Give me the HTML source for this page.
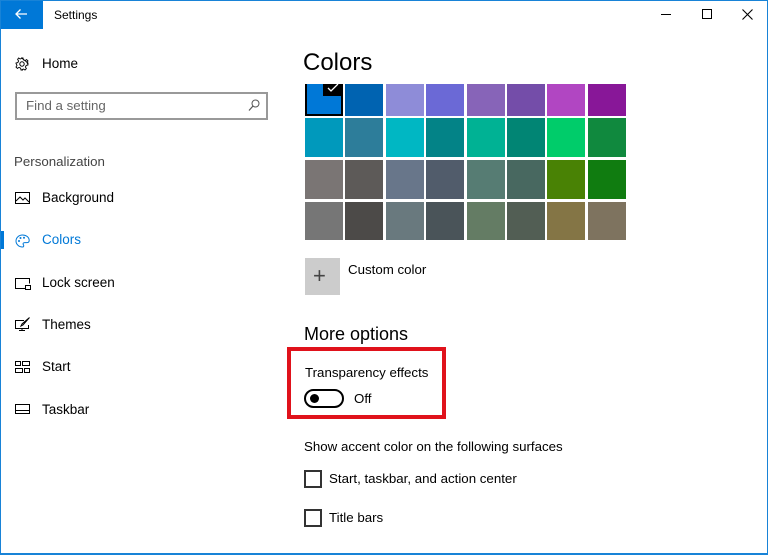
<!DOCTYPE html>
<html><head><meta charset="utf-8"><style>
*{margin:0;padding:0;box-sizing:border-box}
body{width:768px;height:555px;background:#fff;font-family:"Liberation Sans",sans-serif;color:#000;position:relative;overflow:hidden}
.a{position:absolute}
.frame{left:0;top:0;width:768px;height:555px;border:1px solid #1883d7;border-bottom:2px solid #1883d7}
.sw{position:absolute;width:38px}
.nav{position:absolute;left:42px;font-size:13.5px;color:#000}
.ic{position:absolute;left:15px}
.t{font-size:13.3px}
</style></head><body>
<div class="a" style="left:0;top:0;width:43px;height:29px;background:#0078d7"></div>
<svg class="a" style="left:14px;top:8px" width="14" height="12" viewBox="0 0 14 12"><path d="M13 6H2M6.5 1.5L2 6l4.5 4.5" stroke="#fff" stroke-width="1.3" fill="none"/></svg>
<div class="a" style="left:54px;top:8px;font-size:12px">Settings</div>
<div class="a" style="left:661px;top:14px;width:10px;height:1px;background:#000"></div>
<div class="a" style="left:702px;top:9px;width:10px;height:10px;border:1px solid #000"></div>
<svg class="a" style="left:742px;top:9px" width="11" height="11"><path d="M0.5 0.5L10.5 10.5M10.5 0.5L0.5 10.5" stroke="#000" stroke-width="1.1"/></svg>

<svg class="a" style="left:15px;top:57px" width="14" height="14" viewBox="0 0 14 14"><circle cx="7" cy="7" r="2.2" fill="none" stroke="#000"/><path d="M6 1h2l.4 1.8 1.6.8 1.6-1 1.4 1.4-1 1.6.8 1.6L13 7.8v-1.6M13 6v2l-1.8.4-.8 1.6 1 1.6-1.4 1.4-1.6-1-1.6.8L8 13H6l-.4-1.8-1.6-.8-1.6 1L1 10l1-1.6-.8-1.6L1 6.4V6l1.8-.4.8-1.6-1-1.6L3.6 1l1.6 1 1.6-.8z" fill="none" stroke="#000" stroke-width=".9"/></svg>
<div class="nav" style="top:56px">Home</div>
<div class="a" style="left:15px;top:92px;width:253px;height:28px;border:2px solid #999"></div>
<div class="a t" style="left:26px;top:98px;color:#666">Find a setting</div>
<svg class="a" style="left:248px;top:99px" width="12" height="13"><circle cx="7.5" cy="4.5" r="3.5" fill="none" stroke="#555"/><path d="M5 7L1 11.5" stroke="#555" stroke-width="1.2"/></svg>
<div class="a t" style="left:14px;top:154px;color:#444">Personalization</div>

<svg class="ic" style="top:192px" width="15" height="12"><rect x=".5" y=".5" width="14" height="11" fill="none" stroke="#000"/><path d="M1 9l4-4 3 3 2-2 4 4" fill="none" stroke="#000"/></svg>
<div class="nav" style="top:190px">Background</div>
<div class="a" style="left:0;top:231px;width:4px;height:18px;background:#0078d7"></div>
<svg class="ic" style="top:234px" width="15" height="14"><path d="M7.5 1a6.5 6 0 1 0 0 12c1.5 0 1.5-1.5.8-2.4-.7-1 0-2 1.4-2h2.5c1.5 0 2-1 2-2.3C14 3 11 1 7.5 1z" fill="none" stroke="#0078d7"/><circle cx="4" cy="7" r="1" fill="#0078d7"/><circle cx="5.5" cy="4" r="1" fill="#0078d7"/><circle cx="9" cy="3.8" r="1" fill="#0078d7"/></svg>
<div class="nav" style="top:232px;color:#0078d7">Colors</div>
<svg class="ic" style="top:277px" width="16" height="13"><path d="M10 11.5H.5v-10h14v5" fill="none" stroke="#000"/><rect x="10.5" y="8.5" width="5" height="4" fill="none" stroke="#000"/></svg>
<div class="nav" style="top:275px">Lock screen</div>
<svg class="ic" style="top:317px" width="16" height="14"><path d="M9 3.5H.5v8h13V8M4 13.5h6M7 11.5v2" fill="none" stroke="#000"/><path d="M14.5 .5L8 8l-2 1 1-2z" fill="none" stroke="#000"/></svg>
<div class="nav" style="top:317px">Themes</div>
<svg class="ic" style="top:361px" width="15" height="12"><rect x=".5" y=".5" width="5" height="4" fill="none" stroke="#000"/><rect x="7.5" y=".5" width="7" height="4" fill="none" stroke="#000"/><rect x=".5" y="7.5" width="7" height="4" fill="none" stroke="#000"/><rect x="9.5" y="7.5" width="5" height="4" fill="none" stroke="#000"/></svg>
<div class="nav" style="top:359px">Start</div>
<svg class="ic" style="top:404px" width="15" height="10"><rect x=".5" y=".5" width="14" height="9" fill="none" stroke="#000"/><path d="M1 6.5h13" stroke="#000"/></svg>
<div class="nav" style="top:402px">Taskbar</div>

<div class="a" style="left:303px;top:49px;font-size:24px;color:#000">Colors</div>
<div id="g"></div>
<div class="a" style="left:305px;top:258px;width:35px;height:37px;background:#ccc"></div>
<div class="a" style="left:313px;top:266px;font-size:22px;line-height:20px;color:#444;font-weight:300">+</div>
<div class="a t" style="left:348px;top:262px">Custom color</div>
<div class="a" style="left:304px;top:324px;font-size:18px">More options</div>
<div class="a" style="left:287px;top:347px;width:159px;height:72px;border:4px solid #e0121b"></div>
<div class="a t" style="left:305px;top:365px">Transparency effects</div>
<div class="a" style="left:304px;top:389px;width:40px;height:19px;border:2px solid #000;border-radius:10px"></div>
<div class="a" style="left:310px;top:394px;width:9px;height:9px;background:#000;border-radius:50%"></div>
<div class="a t" style="left:354px;top:391px">Off</div>
<div class="a t" style="left:304px;top:439px">Show accent color on the following surfaces</div>
<div class="a" style="left:304px;top:470px;width:18px;height:18px;border:2px solid #333"></div>
<div class="a t" style="left:329px;top:471px">Start, taskbar, and action center</div>
<div class="a" style="left:304px;top:509px;width:18px;height:18px;border:2px solid #333"></div>
<div class="a t" style="left:329px;top:510px">Title bars</div>
<div class="a frame"></div>
<script>
var c=[["#0078d7","#0063b1","#8e8cd8","#6b69d6","#8764b8","#744da9","#b146c2","#881798"],
["#0099bc","#2d7d9a","#00b7c3","#038387","#00b294","#018574","#00cc6a","#10893e"],
["#7a7574","#5d5a58","#68768a","#515c6b","#567c73","#486860","#498205","#107c10"],
["#767676","#4c4a48","#69797e","#4a5459","#647c64","#525e54","#847545","#7e735f"]];
var tops=[84,118,160,202],hs=[32,39,39,38],h="";
for(var r=0;r<4;r++)for(var i=0;i<8;i++){
var x=305+Math.round(i*40.4);
h+='<div class="sw" style="left:'+x+'px;top:'+tops[r]+'px;height:'+hs[r]+'px;background:'+c[r][i]+(r==0&&i==0?';border:2px solid #000;border-top:none':'')+'"></div>';}
h+='<div class="a" style="left:323px;top:84px;width:20px;height:12px;background:#000"></div><svg class="a" style="left:326px;top:84px" width="14" height="10"><path d="M2 4l3 3 7-7" stroke="#fff" stroke-width="1.3" fill="none"/></svg>';
document.getElementById("g").innerHTML=h;
</script>
</body></html>
